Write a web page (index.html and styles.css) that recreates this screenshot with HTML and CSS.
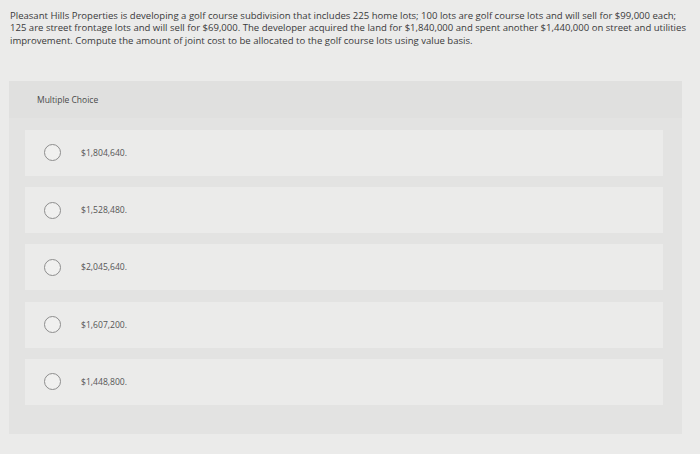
FILE: index.html
```html
<!DOCTYPE html>
<html>
<head>
<meta charset="utf-8">
<link rel="stylesheet" href="styles.css">
</head>
<body>
<div class="question">
<p>Pleasant Hills Properties is developing a golf course subdivision that includes 225 home lots; 100 lots are golf course lots and will sell for $99,000 each;<br>125 are street frontage lots and will sell for $69,000. The developer acquired the land for $1,840,000 and spent another $1,440,000 on street and utilities<br>improvement. Compute the amount of joint cost to be allocated to the golf course lots using value basis.</p>
</div>
<div class="panel">
  <div class="panel-head">Multiple Choice</div>
  <div class="options">
    <div class="option"><span class="radio"></span><span class="label">$1,804,640.</span></div>
    <div class="option"><span class="radio"></span><span class="label">$1,528,480.</span></div>
    <div class="option"><span class="radio"></span><span class="label">$2,045,640.</span></div>
    <div class="option"><span class="radio"></span><span class="label">$1,607,200.</span></div>
    <div class="option"><span class="radio"></span><span class="label">$1,448,800.</span></div>
  </div>
</div>
</body>
</html>
```
FILE: styles.css
```css
html, body {
  margin: 0;
  padding: 0;
  background: #ebebea;
  font-family: "Open Sans", "Liberation Sans", sans-serif;
}
.question {
  padding: 10px 10px 0 10px;
}
.question p {
  margin: 0;
  font-size: 9.55px;
  line-height: 12.3px;
  color: #3a3a3a;
  white-space: nowrap;
}
.panel {
  margin: 34px 18px 0 9px;
  background: #e3e3e2;
  padding-bottom: 29px;
}
.panel-head {
  height: 37px;
  display: flex;
  align-items: center;
  padding-left: 28px;
  font-size: 8.5px;
  color: #4a4a4a;
  background: #e0e0df;
}
.options {
  padding: 12px 19px 0 16px;
  display: flex;
  flex-direction: column;
  gap: 11.25px;
}
.option {
  height: 46px;
  background: #ebebea;
  display: flex;
  align-items: center;
  padding-left: 19px;
}
.radio {
  width: 15px;
  height: 15px;
  border: 1px solid #8d8d8d;
  border-radius: 50%;
  background: #f0f0ef;
  flex: none;
}
.label {
  margin-left: 20px;
  font-size: 8.6px;
  color: #555555;
}
```
